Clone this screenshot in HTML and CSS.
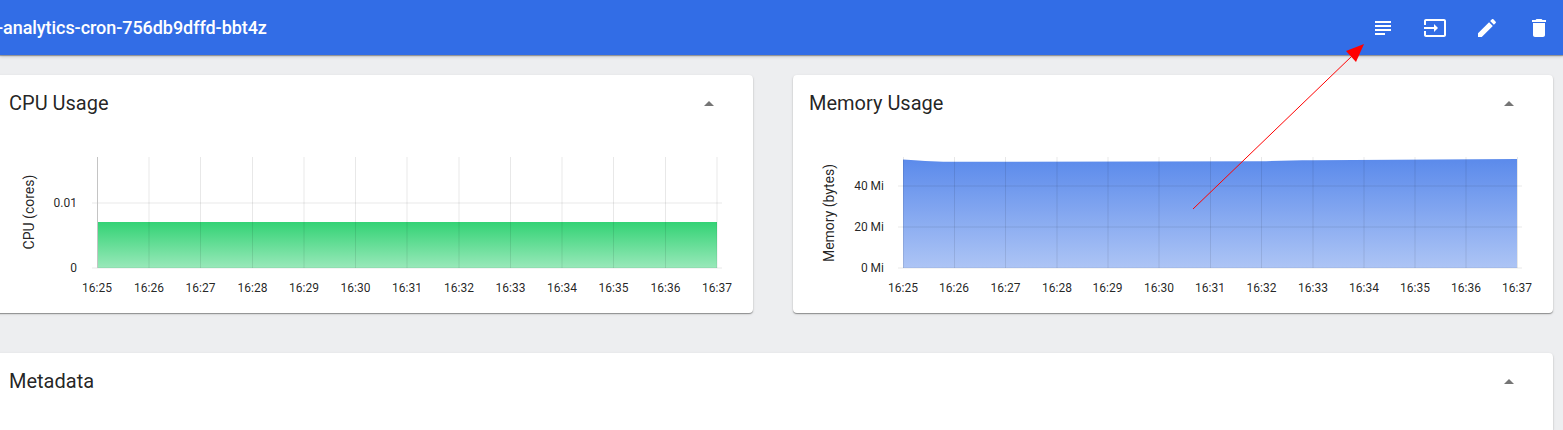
FILE: index.html
```html
<!DOCTYPE html>
<html lang="en">

<head>
    <meta charset="UTF-8">
    <title>Pod details</title>
    <link rel="stylesheet" href="styles.css">
</head>

<body>

    <header class="toolbar">
        <h1 class="toolbar-title">-analytics-cron-756db9dffd-bbt4z</h1>
        <div class="toolbar-actions">
            <button class="icon-button" aria-label="Logs">
                <svg viewBox="0 0 24 24"><path d="M14 17H4v2h10v-2zm6-8H4v2h16V9zM4 15h16v-2H4v2zM4 5v2h16V5H4z"/></svg>
            </button>
            <button class="icon-button" aria-label="Exec">
                <svg viewBox="0 0 24 24"><path d="M21 3.01H3c-1.1 0-2 .9-2 2V9h2V4.99h18v14.03H3V15H1v4.01c0 1.1.9 1.98 2 1.98h18c1.1 0 2-.88 2-1.98v-14c0-1.11-.9-2-2-2zM11 16l4-4-4-4v3H1v2h10v3z"/></svg>
            </button>
            <button class="icon-button" aria-label="Edit">
                <svg viewBox="0 0 24 24"><path d="M3 17.25V21h3.75L17.81 9.94l-3.75-3.75L3 17.25zM20.71 7.04c.39-.39.39-1.02 0-1.41l-2.34-2.34c-.39-.39-1.02-.39-1.41 0l-1.83 1.83 3.75 3.75 1.83-1.83z"/></svg>
            </button>
            <button class="icon-button" aria-label="Delete">
                <svg viewBox="0 0 24 24"><path d="M6 19c0 1.1.9 2 2 2h8c1.1 0 2-.9 2-2V7H6v12zM19 4h-3.5l-1-1h-5l-1 1H5v2h14V4z"/></svg>
            </button>
        </div>
    </header>

    <main class="content">
        <section class="card">
            <div class="card-header">
                <h2 class="card-title">CPU Usage</h2>
                <span class="caret"></span>
            </div>
            <svg class="chart" viewBox="-7 140 760 173">
                <defs>
                    <linearGradient id="green-fade" x1="0" y1="0" x2="0" y2="1">
                        <stop offset="0" stop-color="#00c752" stop-opacity="0.8"/>
                        <stop offset="1" stop-color="#00c752" stop-opacity="0.4"/>
                    </linearGradient>
                </defs>
                <path d="M97 222H717V268H97Z" fill="url(#green-fade)"/>
                <path class="grid" d="M149 157V268M200.5 157V268M252.5 157V268M304 157V268M355.5 157V268M407 157V268M459 157V268M510.5 157V268M562 157V268M613.5 157V268M665.5 157V268M717 157V268M92 203H722M92 268H722"/>
                <path class="axis" d="M97.5 157V268"/>
                <text class="y-title" transform="translate(34 212) rotate(-90)">CPU (cores)</text>
                <g class="y-labels">
                    <text x="77" y="207">0.01</text>
                    <text x="77" y="272">0</text>
                </g>
                <g class="x-labels">
                    <text x="97" y="292">16:25</text>
                    <text x="149" y="292">16:26</text>
                    <text x="200.5" y="292">16:27</text>
                    <text x="252.5" y="292">16:28</text>
                    <text x="304" y="292">16:29</text>
                    <text x="355.5" y="292">16:30</text>
                    <text x="407" y="292">16:31</text>
                    <text x="459" y="292">16:32</text>
                    <text x="510.5" y="292">16:33</text>
                    <text x="562" y="292">16:34</text>
                    <text x="613.5" y="292">16:35</text>
                    <text x="665.5" y="292">16:36</text>
                    <text x="717" y="292">16:37</text>
                </g>
            </svg>
        </section>

        <section class="card">
            <div class="card-header">
                <h2 class="card-title">Memory Usage</h2>
                <span class="caret"></span>
            </div>
            <svg class="chart" viewBox="793 140 760 173">
                <defs>
                    <linearGradient id="blue-fade" gradientUnits="userSpaceOnUse" x1="0" y1="159" x2="0" y2="268">
                        <stop offset="0" stop-color="#326de6" stop-opacity="0.8"/>
                        <stop offset="1" stop-color="#326de6" stop-opacity="0.4"/>
                    </linearGradient>
                </defs>
                <path d="M903 159.5C925 161 940 161.8 954 161.8L1260 161.3C1280 161 1295 160.2 1313 160.2L1517 159V268H903Z" fill="url(#blue-fade)"/>
                <path class="grid" d="M903.5 157V268M954.5 157V268M1005.5 157V268M1057 157V268M1108 157V268M1159 157V268M1210.5 157V268M1261.5 157V268M1313 157V268M1364 157V268M1415 157V268M1466 157V268M1517.5 157V268M898 186H1522M898 227H1522M898 268H1522"/>
                <text class="y-title" transform="translate(834 213) rotate(-90)">Memory (bytes)</text>
                <g class="y-labels">
                    <text x="884" y="190">40 Mi</text>
                    <text x="884" y="231">20 Mi</text>
                    <text x="884" y="272">0 Mi</text>
                </g>
                <g class="x-labels">
                    <text x="903" y="292">16:25</text>
                    <text x="954" y="292">16:26</text>
                    <text x="1005.5" y="292">16:27</text>
                    <text x="1057" y="292">16:28</text>
                    <text x="1107.5" y="292">16:29</text>
                    <text x="1159" y="292">16:30</text>
                    <text x="1210" y="292">16:31</text>
                    <text x="1261.5" y="292">16:32</text>
                    <text x="1313" y="292">16:33</text>
                    <text x="1364" y="292">16:34</text>
                    <text x="1415" y="292">16:35</text>
                    <text x="1466" y="292">16:36</text>
                    <text x="1517" y="292">16:37</text>
                </g>
            </svg>
        </section>

        <section class="card card-wide">
            <div class="card-header">
                <h2 class="card-title">Metadata</h2>
                <span class="caret"></span>
            </div>
        </section>
    </main>

    <!-- hand drawn annotation on top of the page -->
    <svg class="annotation" viewBox="0 0 1563 430">
        <path d="M1193 209L1352 56" stroke="#f00" fill="none"/>
        <path d="M1364 44L1346 51L1356 62Z" fill="#f00"/>
    </svg>

</body>

</html>
```

FILE: styles.css
```css
html, body {
    height: 100%;
}

body {
    margin: 0;
    overflow: hidden;
    background-color: #edeef0;
    font-family: 'Roboto', sans-serif;
    color: rgba(0, 0, 0, 0.87);
}

.toolbar {
    display: flex;
    align-items: center;
    justify-content: space-between;
    height: 55px;
    background-color: #326de6;
    box-shadow: 0 1px 1px rgba(0, 0, 0, 0.3), 0 2px 3px rgba(0, 0, 0, 0.12);
    color: #fff;
}

.toolbar-title {
    margin: 0 0 0 -3px;
    font-size: 18px;
    font-weight: 500;
    letter-spacing: -0.06px;
    white-space: nowrap;
}

.toolbar-actions {
    display: flex;
    gap: 4px;
}

.icon-button {
    display: flex;
    align-items: center;
    justify-content: center;
    width: 48px;
    height: 48px;
    padding: 0;
    border: none;
    background: none;
    color: #fff;
}

.icon-button svg {
    width: 24px;
    height: 24px;
    fill: currentColor;
}

.content {
    display: grid;
    grid-template-columns: 760px 760px;
    gap: 40px;
    margin-left: -7px;
    padding-top: 20px;
}

.card {
    height: 238px;
    background-color: #fff;
    border-radius: 4px;
    box-shadow: 0 1px 1px rgba(0, 0, 0, 0.35), 0 1px 3px rgba(0, 0, 0, 0.12);
}

.card-wide {
    grid-column: 1 / 3;
    height: 77px;
    border-radius: 4px 4px 0 0;
}

.card-header {
    display: flex;
    align-items: center;
    justify-content: space-between;
    height: 56px;
    padding: 0 39px 0 16px;
}

.card-title {
    margin: 0;
    font-size: 20px;
    font-weight: 400;
}

.caret {
    width: 0;
    height: 0;
    border-left: 5px solid transparent;
    border-right: 5px solid transparent;
    border-bottom: 5px solid rgba(0, 0, 0, 0.54);
}

.chart {
    display: block;
    width: 760px;
    height: 173px;
    margin-top: 9px;
}

.grid {
    fill: none;
    stroke: rgba(0, 0, 0, 0.09);
}

.axis {
    fill: none;
    stroke: #c4c4c4;
}

.chart text {
    font-size: 12px;
    fill: rgba(0, 0, 0, 0.87);
}

.chart .y-title {
    font-size: 14px;
    text-anchor: middle;
}

.y-labels text {
    text-anchor: end;
}

.x-labels text {
    text-anchor: middle;
}

.annotation {
    position: absolute;
    top: 0;
    left: 0;
    width: 1563px;
    height: 430px;
    pointer-events: none;
}
```
